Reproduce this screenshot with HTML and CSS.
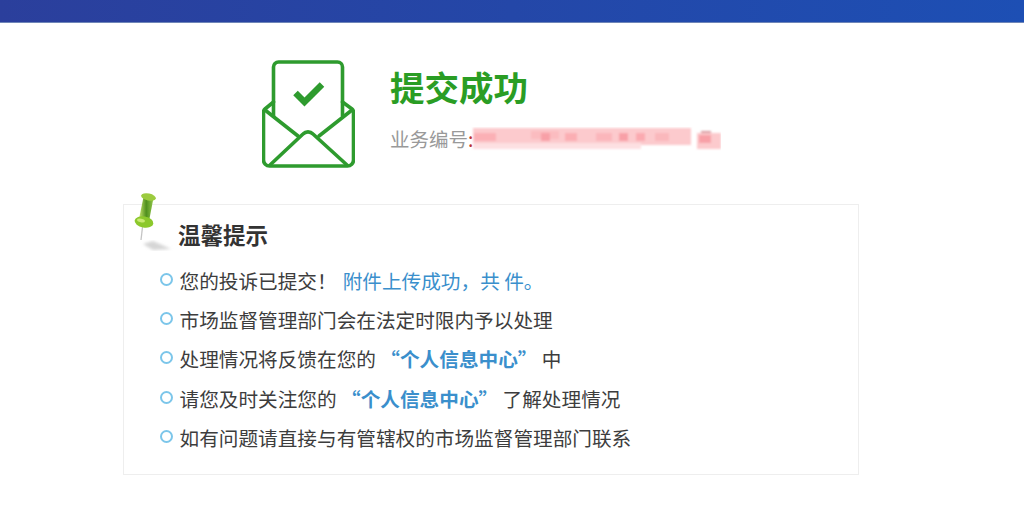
FILE: index.html
```
<!DOCTYPE html>
<html lang="zh-CN">
<head>
<meta charset="utf-8">
<title>提交成功</title>
<link rel="stylesheet" href="styles.css">
</head>
<body>
<header class="topbar"></header>
<section class="hero">
  <svg class="mail" viewBox="0 0 93 108" width="93" height="108" fill="none" stroke="#2e9b2e" stroke-width="3.600" stroke-linejoin="round" stroke-linecap="round">
    <path d="M11.500 56V7a5 5 0 0 1 5-5h59a5 5 0 0 1 5 5v49"/>
    <path d="M11.500 42 3 49a4 4 0 0 0-1.500 3v48a6 6 0 0 0 6 6h78a6 6 0 0 0 6-6V52a4 4 0 0 0-1.500-3L80.500 42"/>
    <path d="M3 50 36 76M90 50 57 76"/>
    <path d="M8 105 41 74a7 7 0 0 1 10 0L85 105"/>
    <path d="M33.500 33 42.500 42 60 24.500" stroke-width="6.400" stroke-linejoin="miter" stroke-linecap="butt"/>
  </svg>
  <div class="hero-text">
    <h1 class="title">提交成功</h1>
    <p class="serial">业务编号<span class="colon">:</span>
      <svg class="blur" viewBox="0 0 250 24" width="250" height="24">
        <defs><filter id="soft"><feGaussianBlur stdDeviation="1.300"/></filter></defs>
        <g filter="url(#soft)">
          <rect x="2" y="1" width="218" height="17" fill="#fccacd"/>
          <rect x="2" y="16" width="168" height="6" fill="#fde0e2"/>
          <rect x="226" y="6" width="24" height="16" fill="#fccacd"/>
          <rect x="3" y="6" width="22" height="8" fill="#fbb0b5"/>
          <rect x="60" y="4" width="28" height="8" fill="#fbbcc0"/>
          <rect x="70" y="6" width="9" height="8" fill="#f8a0a7"/>
          <rect x="94" y="6" width="12" height="8" fill="#fbaeb3"/>
          <rect x="125" y="6" width="16" height="8" fill="#fbb6bb"/>
          <rect x="148" y="6" width="9" height="8" fill="#f8a0a7"/>
          <rect x="165" y="6" width="9" height="8" fill="#fbaab0"/>
          <rect x="184" y="6" width="14" height="8" fill="#fab8bc"/>
          <rect x="228" y="8" width="12" height="8" fill="#f8a0a7"/>
          <rect x="230" y="4" width="10" height="2" fill="#d99aa0"/>
        </g>
      </svg>
    </p>
  </div>
</section>
<section class="card">
  <svg class="pin" viewBox="0 0 48 60" width="48" height="60">
    <defs>
      <linearGradient id="pg" x1="0" y1="0" x2="1" y2="0">
        <stop offset="0" stop-color="#c4e26a"/>
        <stop offset=".5" stop-color="#4f8f1e"/>
        <stop offset="1" stop-color="#93c84a"/>
      </linearGradient>
      <filter id="shade"><feGaussianBlur stdDeviation="1.500"/></filter>
    </defs>
    <path d="M16 52 26 49 44 57 26 58z" fill="#d6d6d6" filter="url(#shade)"/>
    <path d="M15.500 35 14 48" stroke="#c4c4c4" stroke-width="1.300"/>
    <path d="M16.500 5 26.500 6 22 29 12 27z" fill="url(#pg)"/>
    <ellipse cx="21.500" cy="5" rx="7.500" ry="3.500" fill="#9ccb3f" transform="rotate(12 21.500 5)"/>
    <ellipse cx="17" cy="30" rx="9.500" ry="5.500" fill="#8cc82c" transform="rotate(10 17 30)"/>
    <ellipse cx="14" cy="28.500" rx="4" ry="1.800" fill="#c9ea74" transform="rotate(10 14 28.500)"/>
  </svg>
  <h2 class="tip-title">温馨提示</h2>
  <ul class="tips">
    <li>您的投诉已提交！<span class="link">附件上传成功，共 件。</span></li>
    <li>市场监督管理部门会在法定时限内予以处理</li>
    <li>处理情况将反馈在您的 <b class="link">“个人信息中心”</b> 中</li>
    <li>请您及时关注您的 <b class="link">“个人信息中心”</b> 了解处理情况</li>
    <li>如有问题请直接与有管辖权的市场监督管理部门联系</li>
  </ul>
</section>
</body>
</html>
```
FILE: styles.css
```
* { box-sizing: border-box; }
html, body { margin: 0; padding: 0; background: #fff; }
body {
  font-family: "Noto Sans CJK SC", "Noto Sans", sans-serif;
  color: #333;
  height: 528px;
  overflow: hidden;
}
.topbar {
  height: 23px;
  background: linear-gradient(90deg, #2b3f9c, #1d4fb4);
  border-bottom: 1px solid #6f86b8;
}
.hero {
  display: flex;
  align-items: flex-start;
  padding: 37px 0 0 262px;
  height: 181px;
}
.mail { flex: none; display: block; }
.hero-text { margin-left: 35px; }
.title {
  margin: 1px 0 0;
  font-size: 34.500px;
  line-height: 50px;
  font-weight: 700;
  color: #2a9d24;
}
.serial {
  margin: 14px 0 0;
  display: flex;
  align-items: center;
  font-size: 19.500px;
  line-height: 28px;
  color: #999;
}
.colon { color: #b33; margin-right: -2px; }
.blur { display: block; flex: none; }
.card {
  position: relative;
  width: 736px;
  height: 271px;
  margin-left: 123px;
  padding: 11px 0 0 54px;
  border: 1px solid #eee;
}
.pin { position: absolute; left: 3px; top: -13px; }
.tip-title {
  margin: 0;
  font-size: 22.500px;
  line-height: 36px;
  font-weight: 700;
  color: #333;
}
.tips {
  list-style: none;
  margin: 9px 0 0 -18px;
  padding: 0;
}
.tips li {
  display: flex;
  align-items: center;
  white-space: pre;
  height: 39.200px;
  font-size: 19.650px;
  color: #3d3d3d;
}
.tips li::before {
  content: "";
  flex: none;
  box-sizing: border-box;
  width: 13px;
  height: 13px;
  margin: -2px 6.500px 0 0;
  border: 2.200px solid #7cc6ea;
  border-radius: 50%;
}
.tips li .link { color: #3a8fcc; }
.tips li > span.link { margin-left: 6px; }
```
